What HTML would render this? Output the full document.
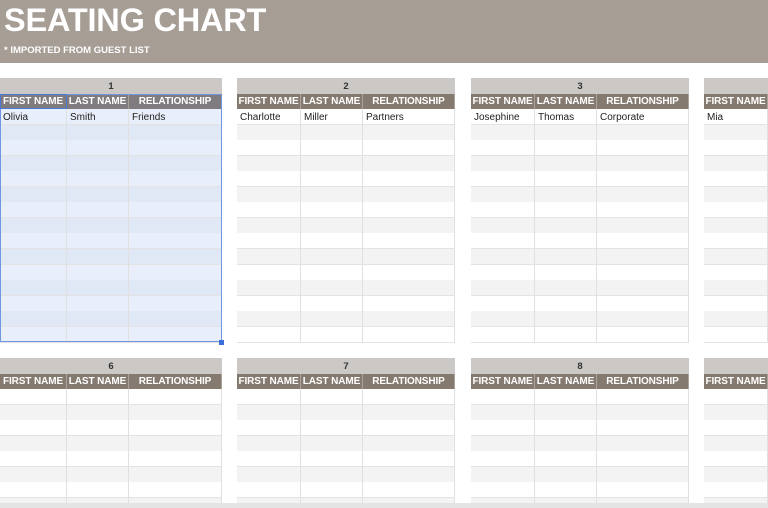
<!DOCTYPE html><html><head><style>
html,body{margin:0;width:768px;height:508px;overflow:hidden}
body{background:#fff;font-family:"Liberation Sans",Arial,sans-serif;position:relative}
#hd{position:absolute;left:0;top:0;width:768px;height:63px;background:#a69d95}
#t{position:absolute;left:4px;top:2px;color:#fff;font-weight:bold;font-size:32.5px;letter-spacing:-0.2px}
#s{position:absolute;left:4px;top:45px;color:#fff;font-weight:bold;font-size:9.5px}
#g{position:absolute;left:0;top:0;width:768px;height:508px;overflow:hidden}
.c{position:absolute;box-sizing:border-box;font-size:10px;overflow:hidden;white-space:nowrap}
#bot{position:absolute;left:0;top:503px;width:768px;height:5px;background:#e4e4e4;z-index:5}
</style></head><body>
<div id="hd"><div id="t">SEATING CHART</div><div id="s">* IMPORTED FROM GUEST LIST</div></div>
<div id="g"></div><div id="bot"></div>
<script>
var g=document.getElementById('g'),h='';
var tabs=[[0,[67,62,93]],[237,[64,62,92]],[471,[64,62,92]],[704,[64,62,92]]];
var data={0:['Olivia','Smith','Friends'],1:['Charlotte','Miller','Partners'],2:['Josephine','Thomas','Corporate'],3:['Mia','','']};
function box(x,y,w,hh,st,txt){h+='<div class="c" style="left:'+x+'px;top:'+y+'px;width:'+w+'px;height:'+hh+'px;'+st+'">'+(txt||'')+'</div>';}
[[78,['1','2','3',''],15],[358,['6','7','8',''],8]].forEach(function(blk){
 var y0=blk[0];
 tabs.forEach(function(t,i){
  var x=t[0],ws=t[1],W=ws[0]+ws[1]+ws[2];
  var sel=(y0==78&&i==0);
  box(x,y0,W,16,'background:#ccc8c5;text-align:center;font-weight:bold;color:#333;line-height:17px;font-size:9.5px',blk[1][i]);
  var hdr=['FIRST NAME','LAST NAME','RELATIONSHIP'],cx=x;
  for(var k=0;k<3;k++){box(cx,y0+16,ws[k],15,'background:'+(sel?'#7f7b7e':'#857a6f')+';color:#fff;font-weight:bold;text-align:center;line-height:16px;border-right:1px solid #aaa29a;font-size:10px;letter-spacing:-0.1px',hdr[k]);cx+=ws[k];}
  var ry=y0+31;
  for(var r=0;r<blk[2];r++){
   cx=x;
   var bg=sel?(r%2?'#e1e8f5':'#e9effa'):(r%2?'#f3f3f3':'#fff');
   for(var k=0;k<3;k++){
    var tx=(r==0&&y0==78)?data[i][k]:'';
    box(cx,ry,ws[k],16,'background:'+bg+';border-right:1px solid #e0e0e0;border-bottom:1px solid #e3e3e3;line-height:18px;padding-left:3px;color:#222;font-size:10px',tx);cx+=ws[k];
   }
   ry+=15.55;
  }
  if(sel){box(x,y0+16,W,ry-y0-16,'border:1px solid #6f96e0');box(x,y0+16,67,15,'border:1.5px solid #4a78d8');box(x+W-3,ry-2,5,5,'background:#3b6fd8');}
 });
});
g.innerHTML=h;
</script></body></html>
